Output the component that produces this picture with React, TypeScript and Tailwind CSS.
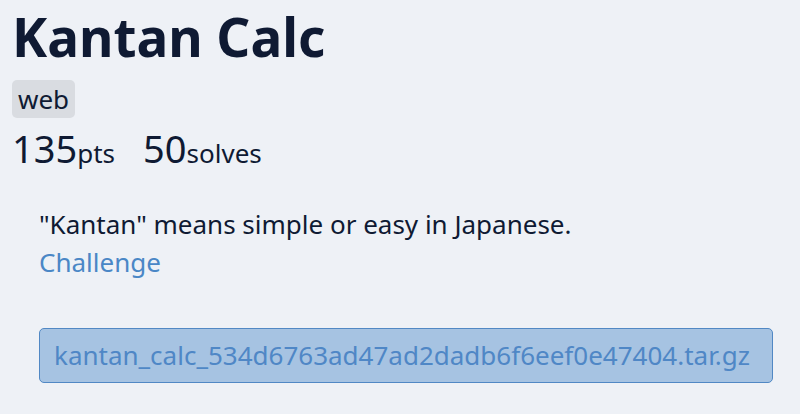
import React from 'react';

const App: React.FC = () => {
  return (
    <div className="min-h-screen w-full bg-[#eef1f6] px-[12px] pt-[5px] text-[#0f1a33]" style={{ fontFamily: '"Noto Sans", "Open Sans", sans-serif' }}>
      <h1 className="text-[53px] font-bold leading-[64px]">Kantan Calc</h1>
      <div className="mt-[11px] flex">
        <span className="rounded-[5px] bg-[#d9dce1] px-[6px] text-[26px] leading-[38px]">web</span>
      </div>
      <div className="mt-[7px] flex items-baseline gap-[28px] leading-[46px]">
        <div>
          <span className="text-[38px]">135</span>
          <span className="text-[26px]">pts</span>
        </div>
        <div>
          <span className="text-[38px]">50</span>
          <span className="text-[26px]">solves</span>
        </div>
      </div>
      <div className="pl-[27px] pt-[25px]">
        <p className="text-[26px] leading-[38px]">"Kantan" means simple or easy in Japanese.</p>
        <a className="block text-[26px] leading-[38px] text-[#4a87c6]">Challenge</a>
        <div className="mt-[47px] w-[734px] rounded-[5px] border border-[#5188c4] bg-[#a6c3e2] px-[14px] text-[26px] leading-[53px] text-[#4f87c6]">
          kantan_calc_534d6763ad47ad2dadb6f6eef0e47404.tar.gz
        </div>
      </div>
    </div>
  );
};

export default App;
